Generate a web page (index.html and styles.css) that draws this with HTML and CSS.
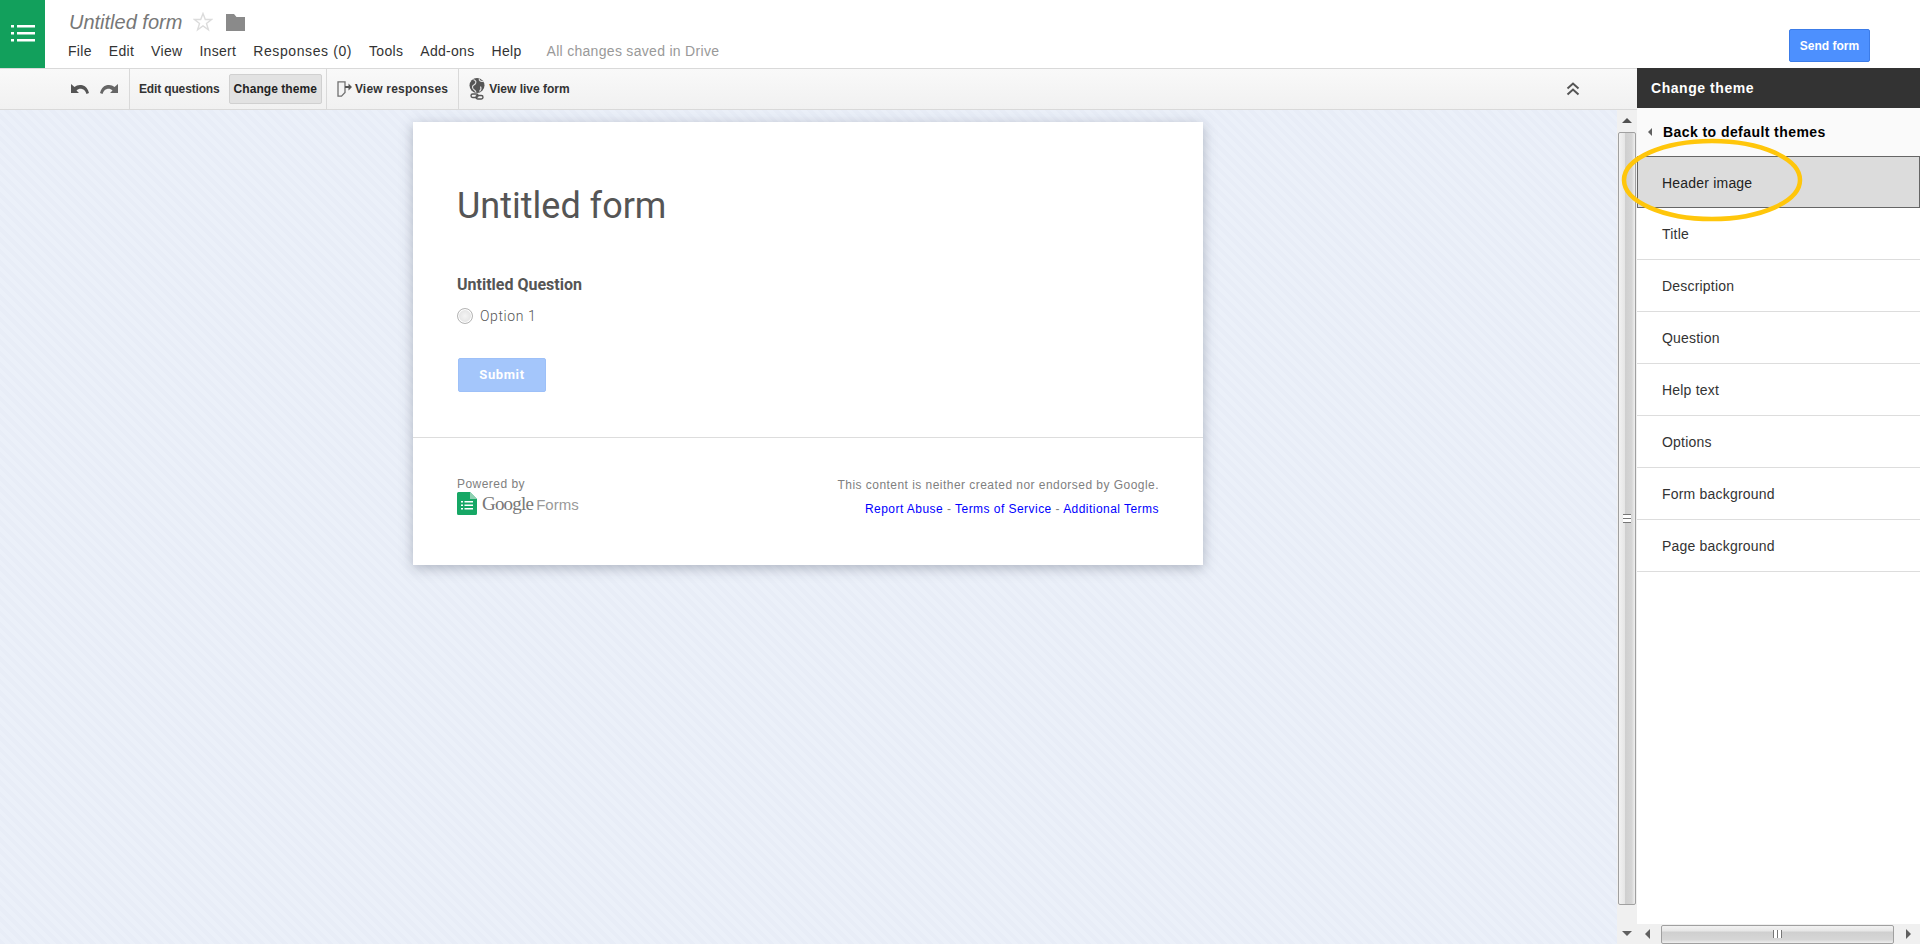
FILE: index.html
```html
<!DOCTYPE html>
<html lang="en">
<head>
    <meta charset="UTF-8">
    <title>Untitled form - Google Forms</title>
    <link rel="stylesheet" href="styles.css">
</head>
<body>

<!-- Top header -->
<header class="app-header">
    <div class="app-logo">
        <svg width="24" height="17" viewBox="0 0 24 17" fill="#fff">
            <rect x="0" y="0" width="3" height="2.500"/><rect x="6" y="0" width="18" height="2.500"/>
            <rect x="0" y="7" width="3" height="2.500"/><rect x="6" y="7" width="18" height="2.500"/>
            <rect x="0" y="14" width="3" height="2.500"/><rect x="6" y="14" width="18" height="2.500"/>
        </svg>
    </div>
    <div class="app-title-block">
        <div class="title-row">
            <span class="doc-title">Untitled form</span>
            <svg class="star-icon" width="20" height="20" viewBox="0 0 20 20"><path d="M10 1.500l2.300 6h6.200l-5 3.900 1.900 6.300-5.400-3.800-5.400 3.800 1.900-6.300-5-3.900h6.200z" fill="none" stroke="#dcdcdc" stroke-width="1.400"/></svg>
            <svg class="folder-icon" width="19" height="17" viewBox="0 0 19 17"><path d="M0 0h8l2.500 3H19v14H0z" fill="#8a8a8a"/></svg>
        </div>
        <nav class="menu-row">
            <span>File</span><span>Edit</span><span>View</span><span>Insert</span><span class="menu-wide">Responses (0)</span><span>Tools</span><span>Add-ons</span><span>Help</span>
            <span class="save-status">All changes saved in Drive</span>
        </nav>
    </div>
    <button class="send-btn">Send form</button>
</header>

<div class="main-row">
    <div class="left-col">
        <!-- Toolbar -->
        <div class="toolbar">
            <div class="tool-group undo-group">
                <svg width="18" height="12" viewBox="0 0 18 12"><path d="M0 1v9h8L5.500 7.500C7 6 9 5.500 11 6c2 .5 3.500 2 4.500 5l2.500-1C17 6 15 3 11.500 2.200 8.500 1.500 5.500 2 3.500 4z" fill="#555"/></svg>
                <svg width="18" height="12" viewBox="0 0 18 12"><path d="M18 1v9h-8l2.500-2.500C11 6 9 5.500 7 6c-2 .5-3.500 2-4.500 5L0 10c1-4 3-7 6.500-7.800 3-.7 6-.2 8 1.800z" fill="#666"/></svg>
            </div>
            <div class="tool-group mode-group">
                <span class="tool-btn tight">Edit questions</span>
                <span class="tool-btn active">Change theme</span>
            </div>
            <div class="tool-group">
                <span class="tool-btn icon-btn wide">
                    <svg width="15" height="16" viewBox="0 0 15 16"><path d="M1 .8h7v10.700l-3.500 3.700H1z" fill="#f4f4f4" stroke="#707070" stroke-width="1.300"/><path d="M8 5h3.500V2.500L15 6l-3.500 3.500V7H8z" fill="#555"/></svg>
                    View responses
                </span>
            </div>
            <div class="tool-group no-line">
                <span class="tool-btn icon-btn">
                    <svg width="17" height="22" viewBox="0 0 17 22"><circle cx="8" cy="7.500" r="7.500" fill="#555"/><path d="M4.500 1.500c2 1 3 2 2 4s-3.500 1-3 4 3 2 3.500 5M10.500 .5c-1 2 1 3 3.500 3M11.500 8.500c1 2 0 4-1 5" fill="none" stroke="#ddd" stroke-width="1.200"/><g fill="none" stroke="#555" stroke-width="1.400"><rect x="2" y="16" width="7" height="3.500" rx="1.700"/><rect x="7" y="17.500" width="7" height="3.500" rx="1.700"/></g></svg>
                    View live form
                </span>
            </div>
            <svg class="collapse-icon" width="14" height="14" viewBox="0 0 14 14"><path d="M1.500 6.500L7 1.500l5.500 5M1.500 12.500L7 7.500l5.500 5" fill="none" stroke="#555" stroke-width="2"/></svg>
        </div>

        <div class="canvas-row">
            <main class="form-canvas">
                <section class="form-card">
                    <div class="form-body">
                        <h1 class="form-title">Untitled form</h1>
                        <div class="question-label">Untitled Question</div>
                        <label class="option-row"><span class="radio"></span>Option 1</label>
                        <div class="submit-btn">Submit</div>
                    </div>
                    <footer class="form-footer">
                        <div class="powered">
                            <div class="powered-label">Powered by</div>
                            <div class="powered-logo">
                                <svg width="20" height="23" viewBox="0 0 20 23"><path d="M1.500 0H13l7 7v14.500a1.500 1.500 0 0 1-1.500 1.500h-17A1.500 1.500 0 0 1 0 21.500v-20A1.500 1.500 0 0 1 1.500 0z" fill="#16a765"/><path d="M13 0l7 7h-7z" fill="#8ed1b2"/><path d="M4 9h2v1.500H4zM7.500 9H16v1.500H7.500zM4 12.500h2V14H4zM7.500 12.500H16V14H7.500zM4 16h2v1.500H4zM7.500 16H16v1.500H7.500z" fill="#fff"/></svg>
                                <span class="logo-google">Google</span>
                                <span class="logo-forms">Forms</span>
                            </div>
                        </div>
                        <div class="disclaimer">
                            <div>This content is neither created nor endorsed by Google.</div>
                            <div class="legal-links"><a href="#">Report Abuse</a> - <a href="#">Terms of Service</a> - <a href="#">Additional Terms</a></div>
                        </div>
                    </footer>
                </section>
            </main>
            <div class="v-scrollbar">
                <span class="arrow-up"></span>
                <div class="v-thumb"><span class="grip-h"></span></div>
                <span class="arrow-down"></span>
            </div>
        </div>
    </div>

    <!-- Theme side panel -->
    <aside class="theme-panel">
        <div class="panel-head">Change theme</div>
        <div class="panel-back"><span class="arrow-left small"></span>Back to default themes</div>
        <ul class="panel-list">
            <li class="selected">Header image</li>
            <li>Title</li>
            <li>Description</li>
            <li>Question</li>
            <li>Help text</li>
            <li>Options</li>
            <li>Form background</li>
            <li>Page background</li>
        </ul>
        <div class="h-scrollbar">
            <span class="arrow-left"></span>
            <div class="h-thumb"><span class="grip-v"></span></div>
            <span class="arrow-right"></span>
        </div>
        <!-- Hand drawn highlight round the first item -->
        <svg class="highlight" width="190" height="92" viewBox="0 0 190 92"><ellipse cx="92" cy="46" rx="88" ry="39" fill="none" stroke="#ffc60b" stroke-width="4.500"/></svg>
    </aside>
</div>

</body>
</html>
```

FILE: styles.css
```css
/* Page */
html, body {
    margin: 0;
    height: 100%;
    overflow: hidden;
}

body {
    width: 1926px;
    height: 944px;
    font-family: "Liberation Sans", Arial, sans-serif;
    background: #ffffff;
    display: flex;
    flex-direction: column;
}

/* Header */
.app-header {
    height: 68px;
    display: flex;
    flex: none;
}

.app-logo {
    width: 45px;
    height: 68px;
    padding-bottom: 2px;
    box-sizing: border-box;
    background: #12a05c;
    display: flex;
    align-items: center;
    justify-content: center;
}

.app-title-block {
    margin-left: 23px;
    flex: 1;
}

.title-row {
    height: 42px;
    padding: 10px 0 0 1px;
    box-sizing: border-box;
    display: flex;
    align-items: flex-start;
}

.doc-title {
    font-size: 20px;
    font-style: italic;
    color: #777777;
    line-height: 24px;
}

.star-icon {
    margin: 2px 0 0 11px;
}

.folder-icon {
    margin: 4px 0 0 13px;
}

.menu-row {
    display: flex;
    gap: 17px;
    font-size: 14px;
    letter-spacing: 0.3px;
    line-height: 18px;
    color: #333333;
}

.menu-wide {
    letter-spacing: 0.6px;
}

.save-status {
    margin-left: 8px;
    color: #999999;
}

.send-btn {
    width: 81px;
    height: 33px;
    margin: 29px 56px 0 0;
    padding: 0;
    border: 1px solid #3c7ce8;
    border-radius: 2px;
    background: #4d90fe;
    color: #ffffff;
    font: bold 12px "Liberation Sans", Arial, sans-serif;
}

/* Main area */
.main-row {
    flex: 1;
    display: flex;
    min-height: 0;
}

.left-col {
    width: 1637px;
    display: flex;
    flex-direction: column;
}

/* Toolbar */
.toolbar {
    height: 42px;
    flex: none;
    box-sizing: border-box;
    border-top: 1px solid #d9d9d9;
    border-bottom: 1px solid #d9d9d9;
    background: linear-gradient(#f9f9f9, #f1f1f1);
    display: flex;
    align-items: stretch;
    padding-left: 71px;
}

.tool-group {
    display: flex;
    align-items: center;
    padding: 0 10px;
    border-right: 1px solid #d9d9d9;
    font-size: 12px;
    font-weight: bold;
    color: #333333;
}

.undo-group {
    padding: 0 11px 0 0;
    gap: 11px;
}

.mode-group {
    padding: 0 4px 0 9px;
    gap: 9px;
}

.no-line {
    border-right: 0;
}

.tool-btn {
    display: flex;
    align-items: center;
    line-height: 30px;
    white-space: nowrap;
}

.tool-btn.tight {
    letter-spacing: -0.15px;
}

.tool-btn.wide {
    letter-spacing: 0.2px;
}

.tool-btn.active {
    height: 30px;
    padding: 0 4px;
    box-sizing: border-box;
    line-height: 28px;
    letter-spacing: 0.05px;
    border: 1px solid #d0d0d0;
    border-radius: 2px;
    background: #e2e2e2;
    color: #222222;
}

.icon-btn {
    gap: 3px;
}

.collapse-icon {
    margin: auto 57px auto auto;
}

/* Form canvas */
.canvas-row {
    flex: 1;
    display: flex;
    min-height: 0;
}

.form-canvas {
    flex: 1;
    padding: 12px 0 0 413px;
    background: repeating-linear-gradient(45deg, #e8edf7 0, #e8edf7 4px, #ebf0f9 4px, #ebf0f9 8px);
}

.form-card {
    width: 790px;
    height: 443px;
    background: #ffffff;
    box-shadow: 0 3px 12px rgba(60, 70, 90, 0.35);
    color: #555555;
    font-family: Roboto, "Liberation Sans", sans-serif;
}

.form-body {
    height: 316px;
    box-sizing: border-box;
    padding: 62px 44px 0;
    border-bottom: 1px solid #dddddd;
}

.form-title {
    margin: 0;
    font-size: 36px;
    font-weight: 400;
    line-height: 44px;
}

.question-label {
    margin-top: 47px;
    font-size: 16px;
    font-weight: 700;
    line-height: 20px;
}

.option-row {
    display: flex;
    align-items: center;
    gap: 7px;
    margin-top: 11px;
    font-size: 14px;
    font-weight: 300;
    letter-spacing: 0.6px;
    line-height: 20px;
}

.radio {
    width: 14px;
    height: 14px;
    border: 1px solid #b5b5b5;
    border-radius: 50%;
    background: radial-gradient(#f4f4f4, #dcdcdc);
    box-shadow: inset 0 0 0 1px #ffffff;
}

.submit-btn {
    width: 88px;
    height: 34px;
    margin: 32px 0 0 1px;
    box-sizing: border-box;
    border: 1px solid #9dc0f8;
    border-radius: 2px;
    background: #a4c6fb;
    color: #ffffff;
    font-size: 13px;
    font-weight: 700;
    letter-spacing: 0.6px;
    line-height: 32px;
    text-align: center;
}

/* Form footer */
.form-footer {
    display: flex;
    justify-content: space-between;
    padding: 39px 44px 0;
    font-family: "Liberation Sans", Arial, sans-serif;
    font-size: 12px;
    color: #808080;
    letter-spacing: 0.46px;
}

.powered-label {
    line-height: 15px;
}

.powered-logo {
    display: flex;
    align-items: center;
    height: 23px;
}

.logo-google {
    margin: 1px 0 0 5px;
    font-family: "Liberation Serif", serif;
    font-size: 19px;
    letter-spacing: -0.8px;
    color: #777777;
}

.logo-forms {
    margin: 1px 0 0 3px;
    font-size: 15px;
    letter-spacing: 0;
    color: #999999;
}

.disclaimer {
    text-align: right;
    line-height: 15px;
    padding-top: 1px;
}

.legal-links {
    margin-top: 9px;
}

.legal-links a {
    color: #0000ff;
    text-decoration: none;
}

/* Fake scrollbars */
.v-scrollbar {
    width: 20px;
    background: #f0f0f0;
    display: flex;
    flex-direction: column;
    align-items: center;
}

.arrow-up, .arrow-down, .arrow-left, .arrow-right {
    width: 0;
    height: 0;
    flex: none;
    border-style: solid;
    border-color: transparent;
}

.arrow-up {
    margin: 8px 0 9px;
    border-width: 0 5px 5px;
    border-bottom-color: #505050;
}

.arrow-down {
    margin: auto 0 8px;
    border-width: 5px 5px 0;
    border-top-color: #606060;
}

.arrow-left {
    border-width: 5px 5px 5px 0;
    border-right-color: #606060;
}

.arrow-left.small {
    margin: 0 11px 0 0;
    border-width: 4px 4px 4px 0;
}

.arrow-right {
    border-width: 5px 0 5px 5px;
    border-left-color: #606060;
}

.v-thumb {
    width: 18px;
    height: 773px;
    box-sizing: border-box;
    border: 1px solid #a0a0a0;
    border-radius: 2px;
    background: linear-gradient(90deg, #f2f2f2 0, #e6e6e6 35%, #cfcfcf 40%, #d6d6d6 80%, #efefef 100%);
    display: flex;
    align-items: center;
    justify-content: center;
}

.grip-h {
    width: 8px;
    height: 7px;
    border-top: 1px solid #777;
    border-bottom: 1px solid #777;
    background: linear-gradient(#fff 0, #fff 3px, #777 3px, #777 4px, #fff 4px);
}

/* Theme panel */
.theme-panel {
    width: 283px;
    display: flex;
    flex-direction: column;
    position: relative;
}

.panel-head {
    height: 40px;
    flex: none;
    padding-left: 14px;
    background: #333333;
    color: #ffffff;
    font-size: 14px;
    font-weight: bold;
    letter-spacing: 0.55px;
    line-height: 40px;
}

.panel-back {
    height: 48px;
    flex: none;
    box-sizing: border-box;
    display: flex;
    align-items: center;
    padding-left: 11px;
    background: #fafafa;
    color: #000000;
    font-size: 14px;
    font-weight: bold;
    letter-spacing: 0.43px;
}

.panel-list {
    flex: 1;
    margin: 0;
    padding: 0;
    list-style: none;
    font-size: 14px;
    letter-spacing: 0.2px;
    color: #333333;
}

.panel-list li {
    height: 52px;
    box-sizing: border-box;
    padding-left: 25px;
    border-bottom: 1px solid #dddddd;
    line-height: 52px;
}

.panel-list li.selected {
    border: 1px solid #666666;
    padding-left: 24px;
    background: #dcdcdc;
    color: #222222;
}

.h-scrollbar {
    height: 20px;
    flex: none;
    background: #f0f0f0;
    display: flex;
    align-items: center;
    padding: 0 9px 0 8px;
}

.h-thumb {
    width: 233px;
    height: 19px;
    margin: 0 auto 0 11px;
    box-sizing: border-box;
    border: 1px solid #a0a0a0;
    border-radius: 2px;
    background: linear-gradient(#f2f2f2 0, #e6e6e6 30%, #cfcfcf 35%, #d6d6d6 80%, #efefef 100%);
    display: flex;
    align-items: center;
    justify-content: center;
}

.grip-v {
    width: 7px;
    height: 8px;
    border-left: 1px solid #777;
    border-right: 1px solid #777;
    background: linear-gradient(90deg, #fff 0, #fff 3px, #777 3px, #777 4px, #fff 4px);
}

.highlight {
    position: absolute;
    left: -17px;
    top: 66px;
    pointer-events: none;
}
```
